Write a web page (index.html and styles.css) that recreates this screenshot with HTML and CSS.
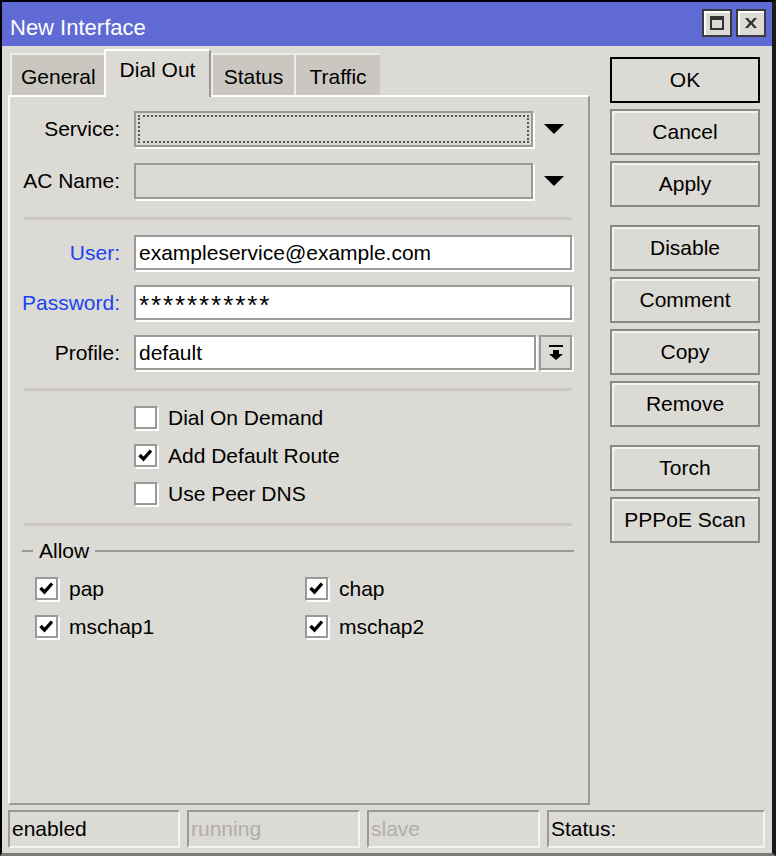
FILE: index.html
```html
<!DOCTYPE html>
<html>
<head>
    <title>New Interface</title>
    <link rel="stylesheet" href="styles.css">
</head>
<body>
<div class="window">
    <div class="titleBar">
        <span class="titleText">New Interface</span>
        <div class="titleButtons">
            <span class="titleButton">
                <svg width="16" height="16" viewBox="0 0 16 16"><path d="M1 1h14v14H1z M3 5v8h10V5z" fill="#333" fill-rule="evenodd"/></svg>
            </span>
            <span class="titleButton">
                <svg width="16" height="16" viewBox="0 0 16 16"><path d="M2 3L5 3L8 6.5L11 3L14 3L9.8 8L14 13L11 13L8 9.5L5 13L2 13L6.2 8z" fill="#333"/></svg>
            </span>
        </div>
    </div>

    <div class="windowBody">
        <div class="mainColumn">
            <div class="tabs">
                <span class="tab tabGeneral">General</span>
                <span class="tab tabDial active">Dial Out</span>
                <span class="tab tabStatus">Status</span>
                <span class="tab tabTraffic">Traffic</span>
            </div>

            <div class="panel">
                <div class="formRow tall">
                    <label class="fieldLabel">Service:</label>
                    <div class="field grayField"><span class="focusRect"></span></div>
                    <span class="dropArrow">
                        <svg width="20" height="10" viewBox="0 0 20 10"><path d="M0 0h20L10 10z" fill="#000"/></svg>
                    </span>
                </div>
                <div class="formRow tall">
                    <label class="fieldLabel">AC Name:</label>
                    <div class="field grayField"></div>
                    <span class="dropArrow">
                        <svg width="20" height="10" viewBox="0 0 20 10"><path d="M0 0h20L10 10z" fill="#000"/></svg>
                    </span>
                </div>

                <div class="separator"></div>

                <div class="formRow">
                    <label class="fieldLabel required">User:</label>
                    <div class="field">exampleservice@example.com</div>
                </div>
                <div class="formRow">
                    <label class="fieldLabel required">Password:</label>
                    <div class="field secret">***********</div>
                </div>
                <div class="formRow">
                    <label class="fieldLabel">Profile:</label>
                    <div class="field">default</div>
                    <span class="fieldButton">
                        <svg width="14" height="16" viewBox="0 0 14 16"><path d="M0 0h14v2H0z M4 5h6v4h4L7 15L0 9h4z" fill="#000"/></svg>
                    </span>
                </div>

                <div class="separator"></div>

                <div class="checkList">
                    <div class="checkRow">
                        <span class="checkBox"></span>
                        <span>Dial On Demand</span>
                    </div>
                    <div class="checkRow">
                        <span class="checkBox checked"><svg width="19" height="19" viewBox="0 0 19 19"><path d="M3.5 9L7.5 13L15 4.5" fill="none" stroke="#000" stroke-width="3.4"/></svg></span>
                        <span>Add Default Route</span>
                    </div>
                    <div class="checkRow">
                        <span class="checkBox"></span>
                        <span>Use Peer DNS</span>
                    </div>
                </div>

                <div class="separator"></div>

                <div class="groupTitle">
                    <span class="groupLine short"></span>
                    <span>Allow</span>
                    <span class="groupLine"></span>
                </div>

                <div class="allowGrid">
                    <div class="checkRow">
                        <span class="checkBox checked"><svg width="19" height="19" viewBox="0 0 19 19"><path d="M3.5 9L7.5 13L15 4.5" fill="none" stroke="#000" stroke-width="3.4"/></svg></span>
                        <span>pap</span>
                    </div>
                    <div class="checkRow">
                        <span class="checkBox checked"><svg width="19" height="19" viewBox="0 0 19 19"><path d="M3.5 9L7.5 13L15 4.5" fill="none" stroke="#000" stroke-width="3.4"/></svg></span>
                        <span>chap</span>
                    </div>
                    <div class="checkRow">
                        <span class="checkBox checked"><svg width="19" height="19" viewBox="0 0 19 19"><path d="M3.5 9L7.5 13L15 4.5" fill="none" stroke="#000" stroke-width="3.4"/></svg></span>
                        <span>mschap1</span>
                    </div>
                    <div class="checkRow">
                        <span class="checkBox checked"><svg width="19" height="19" viewBox="0 0 19 19"><path d="M3.5 9L7.5 13L15 4.5" fill="none" stroke="#000" stroke-width="3.4"/></svg></span>
                        <span>mschap2</span>
                    </div>
                </div>
            </div>
        </div>

        <div class="buttonColumn">
            <div class="buttonGroup">
                <button class="winButton default">OK</button>
                <button class="winButton">Cancel</button>
                <button class="winButton">Apply</button>
            </div>
            <div class="buttonGroup">
                <button class="winButton">Disable</button>
                <button class="winButton">Comment</button>
                <button class="winButton">Copy</button>
                <button class="winButton">Remove</button>
            </div>
            <div class="buttonGroup">
                <button class="winButton">Torch</button>
                <button class="winButton">PPPoE Scan</button>
            </div>
        </div>
    </div>

    <div class="statusBar">
        <span class="statusCell">enabled</span>
        <span class="statusCell dim">running</span>
        <span class="statusCell dim">slave</span>
        <span class="statusCell">Status:</span>
    </div>
</div>
</body>
</html>
```

FILE: styles.css
```css
body {
    margin: 0;
    padding: 0;
    font-family: 'Liberation Sans', Arial, sans-serif;
    font-size: 21px;
    color: #000;
}

.window {
    width: 776px;
    height: 856px;
    box-sizing: border-box;
    border-top: 2px solid #000;
    border-left: 2px solid #000;
    border-right: 4px solid #1a1a1a;
    border-bottom: 3px solid #7a7a7a;
    background-color: #dcdad4;
    display: flex;
    flex-direction: column;
}

.titleBar {
    height: 44px;
    flex-shrink: 0;
    background-color: #5f6ad5;
    display: flex;
    align-items: center;
    justify-content: space-between;
    padding: 0 6px 0 8px;
}

.titleText {
    color: #fff;
    font-size: 22px;
    padding-top: 7px;
}

.titleButtons {
    display: flex;
    gap: 4px;
    margin-top: -2px;
}

.titleButton {
    width: 26px;
    height: 24px;
    border: 2px solid #3a3a3a;
    background-color: #dcdad4;
    box-shadow: inset 2px 2px 0 #fff;
    display: flex;
    align-items: center;
    justify-content: center;
}

.windowBody {
    display: flex;
    gap: 20px;
    padding: 3px 12px 0 6px;
}

.mainColumn {
    width: 582px;
}

.tabs {
    display: flex;
    align-items: flex-end;
    height: 46px;
    padding-left: 2px;
}

.tab {
    height: 42px;
    box-sizing: border-box;
    padding-top: 7px;
    background-color: #cac7c1;
    border-top: 2px solid #eeece8;
    border-left: 2px solid #eeece8;
    line-height: 30px;
    text-align: center;
}

.tabGeneral {
    width: 94px;
    text-align: left;
    padding-left: 9px;
}

.tabDial {
    width: 107px;
}

.tabStatus {
    width: 83px;
}

.tabTraffic {
    width: 86px;
}

.tab.active {
    height: 48px;
    margin-bottom: -2px;
    padding-top: 4px;
    position: relative;
    z-index: 1;
    background-color: #dcdad4;
    border-top: 2px solid #fff;
    border-left: 2px solid #fff;
    border-right: 2px solid #999;
}

.panel {
    height: 710px;
    box-sizing: border-box;
    border-top: 2px solid #fff;
    border-left: 2px solid #fff;
    border-right: 2px solid #999;
    border-bottom: 2px solid #999;
    padding: 14px 16px 0 0;
}

.formRow {
    display: flex;
    align-items: center;
    height: 35px;
    margin-bottom: 15px;
}

.formRow.tall {
    height: 36px;
    margin-bottom: 16px;
}

.fieldLabel {
    width: 110px;
    margin-right: 14px;
    text-align: right;
    flex-shrink: 0;
}

.fieldLabel.required {
    color: #2142f2;
}

.field {
    flex: 1;
    height: 100%;
    box-sizing: border-box;
    border: 2px solid #999;
    background-color: #fff;
    box-shadow: 2px 2px 0 #fff;
    padding: 0 3px;
    line-height: 31px;
    white-space: nowrap;
}

.field.secret {
    font-size: 26px;
    letter-spacing: 1.9px;
    line-height: 36px;
}

.grayField {
    background-color: #dcdad4;
    padding: 2px;
}

.focusRect {
    display: block;
    height: 100%;
    box-sizing: border-box;
    border: 2px dotted #555;
}

.dropArrow {
    width: 37px;
    flex-shrink: 0;
    display: flex;
    justify-content: center;
    padding-left: 2px;
}

.fieldButton {
    width: 33px;
    height: 100%;
    margin-left: 3px;
    box-sizing: border-box;
    border: 2px solid #999;
    box-shadow: 2px 2px 0 #fff;
    display: flex;
    align-items: center;
    justify-content: center;
}

.separator {
    height: 3px;
    background-color: #cbc8c1;
    margin: 18px 0 15px 14px;
}

.checkList {
    padding-left: 124px;
    margin-bottom: 17px;
}

.checkRow {
    display: flex;
    align-items: center;
    height: 23px;
    margin-bottom: 15px;
    gap: 11px;
}

.checkBox {
    width: 23px;
    height: 23px;
    box-sizing: border-box;
    border: 2px solid #999;
    background-color: #fff;
    box-shadow: 2px 2px 0 #fff;
    flex-shrink: 0;
    display: flex;
}

.groupTitle {
    display: flex;
    align-items: center;
    gap: 6px;
    height: 20px;
    margin: 14px -2px 16px 12px;
}

.groupLine {
    flex: 1;
    height: 2px;
    background-color: #999;
}

.groupLine.short {
    flex: 0 0 11px;
}

.allowGrid {
    display: grid;
    grid-template-columns: 270px 1fr;
    padding-left: 25px;
}

.buttonColumn {
    width: 150px;
    padding-top: 8px;
    display: flex;
    flex-direction: column;
    gap: 18px;
}

.buttonGroup {
    display: flex;
    flex-direction: column;
    gap: 6px;
}

.winButton {
    height: 46px;
    font-family: 'Liberation Sans', Arial, sans-serif;
    font-size: 21px;
    color: #000;
    background-color: #dcdad4;
    border: 2px solid #888;
    box-shadow: inset 2px 2px 0 #f4f3f0;
    padding: 0;
}

.winButton.default {
    border-color: #000;
    box-shadow: none;
}

.statusBar {
    display: grid;
    grid-template-columns: 172px 173px 173px 1fr;
    gap: 7px;
    padding: 0 7px 0 6px;
    margin-top: 5px;
}

.statusCell {
    height: 38px;
    box-sizing: border-box;
    border-top: 2px solid #999;
    border-left: 2px solid #999;
    border-right: 2px solid #f4f3f0;
    border-bottom: 2px solid #f4f3f0;
    padding-left: 2px;
    line-height: 34px;
}

.statusCell.dim {
    color: #b0aea9;
}
```
